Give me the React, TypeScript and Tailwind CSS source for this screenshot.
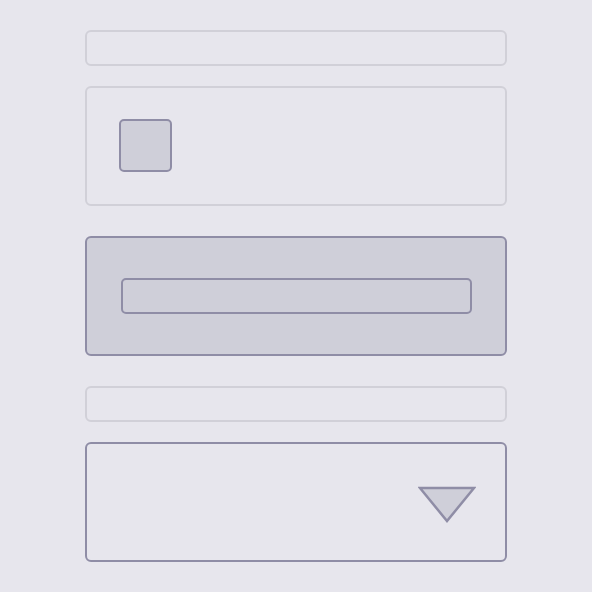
export default function App() {
  return (
    <div className="min-h-[592px] w-full bg-[#e7e6ed] flex justify-center">
      <div className="w-[422px] pt-[30px] pb-[30px] flex flex-col">
        {/* label placeholder */}
        <div className="h-[36px] rounded-[6px] border-2 border-[#d1d0d8]" />

        {/* checkbox card */}
        <div className="mt-[20px] h-[120px] rounded-[6px] border-2 border-[#d1d0d8] pt-[31px] pl-8">
          <div className="w-[53px] h-[53px] rounded-[5px] border-[2.5px] border-[#8f8da6] bg-[#cfcfd9]" />
        </div>

        {/* selected input card */}
        <div className="mt-[30px] h-[120px] rounded-[6px] border-[2.5px] border-[#8f8da6] bg-[#cfcfd9] flex items-center px-[33.5px]">
          <div className="w-full h-[36px] rounded-[5px] border-[2.5px] border-[#8f8da6] bg-[#cfcfd9]" />
        </div>

        <div className="mt-[30px] h-[36px] rounded-[6px] border-2 border-[#d1d0d8]" />

        {/* dropdown */}
        <div className="mt-[20px] h-[120px] rounded-[6px] border-[2.5px] border-[#8f8da6] flex items-center justify-end pr-[29px] pt-[6px]">
          <svg width="58" height="38" viewBox="0 0 58 38">
            <polygon
              points="2,2 56,2 29,35"
              fill="#cfcfd9"
              stroke="#8f8da6"
              strokeWidth="2.5"
              strokeLinejoin="miter"
            />
          </svg>
        </div>
      </div>
    </div>
  );
}
